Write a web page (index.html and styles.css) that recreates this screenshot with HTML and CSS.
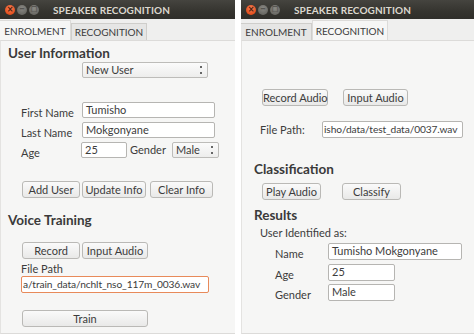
FILE: index.html
```html
<!DOCTYPE html>
<html>
    <head>
        <title>Speaker Recognition</title>
        <meta charset="utf-8" />
        <link rel="stylesheet" href="styles.css">
    </head>
    <body>
        <div class="desktop">

            <!-- Enrolment window -->
            <div class="window left">
                <div class="titlebar">
                    <span class="wbtn close">&times;</span>
                    <span class="wbtn min">&minus;</span>
                    <span class="wbtn max">&#9633;</span>
                    <span class="title">SPEAKER RECOGNITION</span>
                </div>
                <div class="tabs">
                    <div class="tab selected first">ENROLMENT</div>
                    <div class="tab second">RECOGNITION</div>
                </div>
                <div class="pane enrol">
                    <div class="heading">User Information</div>
                    <div class="row combo-row">
                        <div class="combo wide">New User<span class="spin"></span></div>
                    </div>

                    <div class="form">
                        <div class="frow">
                            <span class="label">First Name</span>
                            <div class="field name">Tumisho</div>
                        </div>
                        <div class="frow">
                            <span class="label">Last Name</span>
                            <div class="field name">Mokgonyane</div>
                        </div>
                        <div class="frow">
                            <span class="label">Age</span>
                            <div class="field age">25</div>
                            <span class="label gender">Gender</span>
                            <div class="combo small">Male<span class="spin"></span></div>
                        </div>
                    </div>

                    <div class="row btns user-btns">
                        <div class="button b-add">Add User</div>
                        <div class="button b-update">Update Info</div>
                        <div class="button b-clear">Clear Info</div>
                    </div>

                    <div class="heading voice">Voice Training</div>
                    <div class="row btns rec-btns">
                        <div class="button b-record">Record</div>
                        <div class="button b-input">Input Audio</div>
                    </div>
                    <div class="label path-label">File Path</div>
                    <div class="field focus path">a/train_data/nchlt_nso_117m_0036.wav</div>
                    <div class="button b-train">Train</div>
                </div>
            </div>

            <!-- Recognition window -->
            <div class="window right">
                <div class="titlebar">
                    <span class="wbtn close">&times;</span>
                    <span class="wbtn min">&minus;</span>
                    <span class="wbtn max">&#9633;</span>
                    <span class="title">SPEAKER RECOGNITION</span>
                </div>
                <div class="tabs">
                    <div class="tab first">ENROLMENT</div>
                    <div class="tab selected second">RECOGNITION</div>
                </div>
                <div class="pane recog">
                    <div class="row btns audio-btns">
                        <div class="button b-recaudio">Record Audio</div>
                        <div class="button b-inaudio">Input Audio</div>
                    </div>
                    <div class="row path-row">
                        <span class="label">File Path:</span>
                        <div class="field test-path">isho/data/test_data/0037.wav</div>
                    </div>

                    <div class="heading classif">Classification</div>
                    <div class="row btns class-btns">
                        <div class="button b-play">Play Audio</div>
                        <div class="button b-classify">Classify</div>
                    </div>

                    <div class="heading results">Results</div>
                    <div class="label ident">User Identified as:</div>
                    <div class="rrow r-name">
                        <span class="label">Name</span>
                        <div class="field r-full">Tumisho Mokgonyane</div>
                    </div>
                    <div class="rrow r-age">
                        <span class="label">Age</span>
                        <div class="field r-short">25</div>
                    </div>
                    <div class="rrow r-gender">
                        <span class="label">Gender</span>
                        <div class="field r-short">Male</div>
                    </div>
                </div>
            </div>

        </div>
    </body>
</html>
```
FILE: styles.css
```css
body {
    margin:             0;
    background:         #ffffff;
    color:              #3c3c3c;
    font-family:        Lato, "Open Sans", sans-serif;
    font-size:          11px;
}

.desktop {
    display:            flex;
    gap:                6px;
    width:              474px;
    height:             335px;
}

.window {
    display:            flex;
    flex-direction:     column;
    height:             334px;
    background:         #efefee;
}

.window.left {
    width:              235px;
}

.window.right {
    width:              233px;
}

/* Title bar */
.titlebar {
    display:            flex;
    align-items:        center;
    height:             19px;
    padding-left:       5px;
    background:         linear-gradient(to bottom, #45443f, #35342f 60%, #2f2e2a);
    flex-shrink:        0;
}

.wbtn {
    display:            inline-flex;
    align-items:        center;
    justify-content:    center;
    width:              10px;
    height:             10px;
    border-radius:      50%;
    margin-right:       2px;
    font-family:        "DejaVu Sans", sans-serif;
    font-size:          8px;
    line-height:        1;
    font-weight:        bold;
    color:              #3a3935;
}

.wbtn.close {
    background:         radial-gradient(circle at 50% 35%, #f7825a, #e44f1d 70%);
    color:              #4a1c0c;
}

.wbtn.min, .wbtn.max {
    background:         radial-gradient(circle at 50% 35%, #8a8984, #6a6964 70%);
    font-size:          7px;
}

.title {
    margin-left:        12px;
    color:              #dcd8cf;
    font-weight:        bold;
    font-size:          10px;
    letter-spacing:     0.1px;
}

/* Tabs */
.tabs {
    display:            flex;
    align-items:        flex-end;
    height:             21px;
    flex-shrink:        0;
}

.tab {
    box-sizing:         border-box;
    height:             17px;
    line-height:        17px;
    text-align:         center;
    border:             1px solid #cfcecb;
    border-bottom:      none;
    background:         #e6e6e5;
    color:              #3c3c3c;
    font-size:          10px;
    white-space:        nowrap;
}

.tab.first {
    width:              71px;
    border-left:        none;
}

.tab.second {
    width:              76px;
}

.tab.selected {
    height:             20px;
    line-height:        20px;
    background:         #f6f6f5;
    border-color:       #dcdbd9;
}

.pane {
    flex:               1;
    display:            flex;
    flex-direction:     column;
    align-items:        flex-start;
    background:         #f6f6f5;
    border-top:         1px solid #dcdbd9;
    border-left:        1px solid #e4e3e1;
    border-bottom:      1px solid #dcdbd9;
}

/* Common widgets */
.heading {
    font-size:          13.5px;
    font-weight:        bold;
    line-height:        17px;
    color:              #3a3a3a;
}

.row {
    display:            flex;
    align-items:        center;
}

.label {
    line-height:        14px;
    color:              #3c3c3c;
    white-space:        nowrap;
}

.field, .combo {
    box-sizing:         border-box;
    height:             16px;
    line-height:        14px;
    padding-left:       3px;
    background:         #ffffff;
    border:             1px solid #b6b5b2;
    border-radius:      2px;
    white-space:        nowrap;
    overflow:           hidden;
}

.combo {
    position:           relative;
    background:         linear-gradient(to bottom, #fbfbfb, #ededec);
    border-color:       #bdbcb9;
}

.combo .spin {
    position:           absolute;
    right:              5px;
    top:                3px;
    width:              2px;
    height:             8px;
    background:
        linear-gradient(#666, #666) top / 2px 2px no-repeat,
        linear-gradient(#666, #666) bottom / 2px 2px no-repeat;
}

.field.focus {
    border-color:       #e88a5a;
}

.button {
    box-sizing:         border-box;
    height:             17px;
    line-height:        15px;
    text-align:         center;
    white-space:        nowrap;
    background:         linear-gradient(to bottom, #fafafa, #e9e9e8);
    border:             1px solid #bab9b6;
    border-radius:      3px;
    color:              #3c3c3c;
}

/* Enrolment pane */
.enrol {
    padding-left:       7px;
}

.enrol .heading {
    margin-top:         4px;
}

.combo.wide {
    margin-left:        74px;
    width:              126px;
}

.form {
    margin-top:         24px;
    display:            flex;
    flex-direction:     column;
    gap:                4px;
}

.frow {
    display:            flex;
    align-items:        center;
    height:             16px;
}

.frow .label {
    width:              61px;
    margin-left:        13px;
    padding-top:        6px;
}

.field.name {
    width:              133px;
}

.field.age {
    width:              46px;
    margin-left:        -1px;
}

.frow .label.gender {
    width:              auto;
    margin-left:        3px;
    padding-top:        0;
}

.combo.small {
    width:              47px;
    margin-left:        6px;
}

.user-btns {
    margin-top:         23px;
    margin-left:        14px;
}

.b-add {
    width:              58px;
}

.b-update {
    width:              64px;
    margin-left:        2px;
}

.b-clear {
    width:              63px;
    margin-left:        4px;
}

.heading.voice {
    margin-top:         14px;
}

.rec-btns {
    margin-top:         13px;
    margin-left:        14px;
}

.b-record {
    width:              58px;
}

.b-input {
    width:              66px;
    margin-left:        2px;
}

.path-label {
    margin-top:         3px;
    margin-left:        13px;
}

.field.path {
    height:             17px;
    width:              188px;
    margin-left:        13px;
    padding-left:       1px;
    font-size:          10.2px;
    letter-spacing:     -0.1px;
}

.b-train {
    width:              126px;
    margin-top:         17px;
    margin-left:        14px;
}

/* Recognition pane */
.audio-btns {
    margin-top:         48px;
    margin-left:        20px;
}

.b-recaudio {
    width:              66px;
}

.b-inaudio {
    width:              65px;
    margin-left:        15px;
}

.path-row {
    margin-top:         15px;
    margin-left:        18px;
    height:             17px;
}

.path-row .label {
    width:              62px;
}

.field.test-path {
    height:             17px;
    width:              141px;
    padding-left:       1px;
    font-size:          10.2px;
    letter-spacing:     -0.1px;
}

.heading.classif {
    margin-top:         23px;
    margin-left:        12px;
}

.class-btns {
    margin-top:         5px;
    margin-left:        20px;
}

.b-play {
    width:              59px;
}

.b-classify {
    width:              59px;
    margin-left:        21px;
}

.heading.results {
    margin-top:         7px;
    margin-left:        12px;
}

.label.ident {
    margin-top:         2px;
    margin-left:        18px;
}

.rrow {
    display:            flex;
    align-items:        center;
    height:             17px;
    margin-left:        33px;
}

.rrow .label {
    width:              53px;
    padding-top:        5px;
}

.r-name {
    margin-top:         3px;
}

.r-age {
    margin-top:         4px;
}

.r-gender {
    margin-top:         3px;
}

.field.r-full {
    height:             17px;
    width:              134px;
}

.field.r-short {
    height:             17px;
    width:              67px;
}
```
